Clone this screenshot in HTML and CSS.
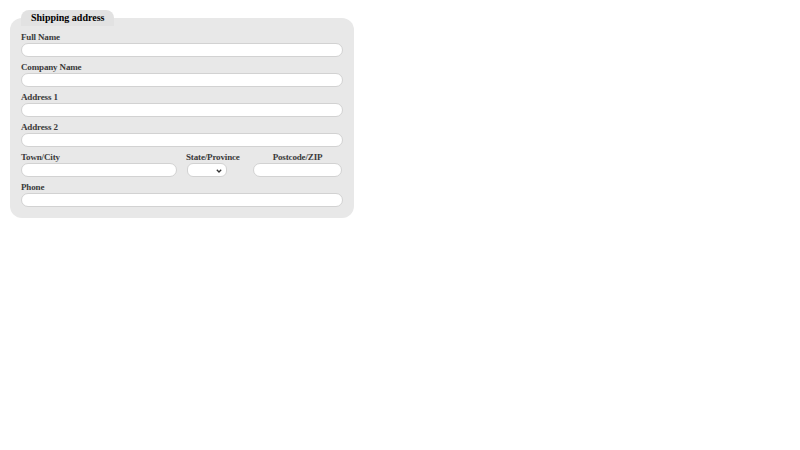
FILE: index.html
```html
<!DOCTYPE html>
<html>
<head>
<meta charset="utf-8">
<link rel="stylesheet" href="styles.css">
</head>
<body>
<form class="form">
  <fieldset class="box">
    <legend class="title">Shipping address</legend>
    <div class="field">
      <label class="lbl">Full Name</label>
      <input class="inp" type="text">
    </div>
    <div class="field">
      <label class="lbl">Company Name</label>
      <input class="inp" type="text">
    </div>
    <div class="field">
      <label class="lbl">Address 1</label>
      <input class="inp" type="text">
    </div>
    <div class="field">
      <label class="lbl">Address 2</label>
      <input class="inp" type="text">
    </div>
    <div class="field row">
      <div class="col">
        <label class="lbl">Town/City</label>
        <input class="inp" type="text">
      </div>
      <div class="col">
        <label class="lbl">State/Province</label>
        <div class="selwrap">
          <select class="sel"><option></option></select>
          <svg class="chev" width="6" height="4" viewBox="0 0 6 4"><path d="M0.8 0.8 L3 3 L5.2 0.8" fill="none" stroke="#333" stroke-width="1.3"/></svg>
        </div>
      </div>
      <div class="col center">
        <label class="lbl">Postcode/ZIP</label>
        <input class="inp" type="text">
      </div>
    </div>
    <div class="field">
      <label class="lbl">Phone</label>
      <input class="inp" type="text">
    </div>
  </fieldset>
</form>
</body>
</html>
```
FILE: styles.css
```css
body {
  margin: 8px;
  font-family: "Liberation Serif", "Times New Roman", serif;
  background: #fff;
}
.form {
  margin: 0;
  padding-top: 2px;
}
.box {
  width: 322px;
  margin: 0 2px;
  padding: 5px 11px 11px 11px;
  border: none;
  border-radius: 12px;
  background: #e8e8e8;
}
.title {
  padding: 2px 10px;
  line-height: 12px;
  background: #e2e2e2;
  border-radius: 8px 8px 0 0;
  font-weight: bold;
  font-size: 10px;
  color: #000;
}
.field {
  margin-bottom: 4px;
}
.field:last-child {
  margin-bottom: 0;
}
.lbl {
  display: block;
  font-size: 9px;
  letter-spacing: -0.15px;
  font-weight: bold;
  line-height: 12px;
  color: #3a3a3a;
}
.inp {
  display: block;
  box-sizing: border-box;
  width: 100%;
  height: 14px;
  margin: 0;
  padding: 0 6px;
  border: 1px solid #d2d2d2;
  border-radius: 7px;
  background: #fff;
  font-size: 9px;
  outline: none;
}
.row {
  display: grid;
  grid-template-columns: 156px 57px 90px;
  column-gap: 9px;
}
.row .col:nth-child(3) {
  margin-left: 1px;
}
.center .lbl {
  text-align: center;
}
.selwrap {
  position: relative;
  width: 40px;
  height: 14px;
  margin-left: 1px;
}
.sel {
  display: block;
  box-sizing: border-box;
  width: 40px;
  height: 14px;
  margin: 0;
  padding: 0;
  border: 1px solid #d2d2d2;
  border-radius: 6px;
  background: #fff;
  font-size: 9px;
  appearance: none;
  -webkit-appearance: none;
}
.chev {
  position: absolute;
  left: 29px;
  top: 6px;
}
```
